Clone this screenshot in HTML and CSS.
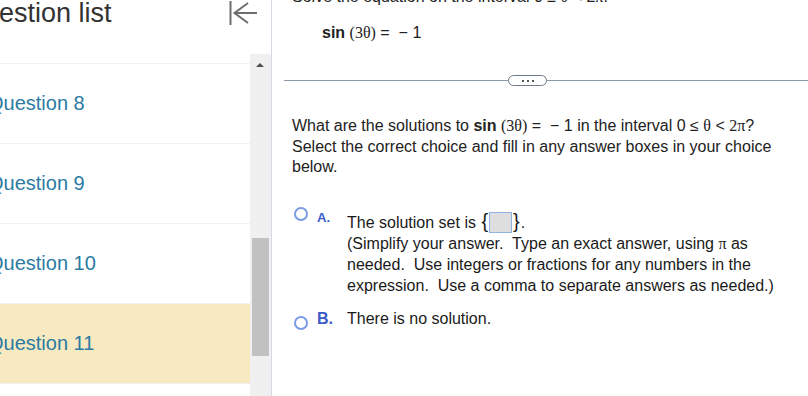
FILE: index.html
```html
<!DOCTYPE html>
<html lang="en">

<head>
    <meta charset="UTF-8">
    <meta name="viewport" content="width=device-width, initial-scale=1.0">
    <title>Question 11</title>
    <link rel="stylesheet" href="styles.css">
</head>

<body>
    <div class="app">
        <div class="sidebar">
            <div class="side-head">
                <h2 class="side-title">Question list</h2>
                <button class="collapse-btn" type="button" title="Collapse">
                    <svg width="30" height="26" viewBox="0 0 30 26">
                        <path d="M2.5 1 V25" />
                        <path d="M6 13 H29" />
                        <path d="M20 3 L6.5 13 L20 23" />
                    </svg>
                </button>
            </div>
            <div class="side-body">
                <div class="q-list">
                    <div class="q-list-inner">
                        <div class="q-row">Question 7</div>
                        <div class="q-row">Question 8</div>
                        <div class="q-row">Question 9</div>
                        <div class="q-row">Question 10</div>
                        <div class="q-row current">Question 11</div>
                        <div class="q-row">Question 12</div>
                    </div>
                </div>
                <div class="scrollbar">
                    <div class="scroll-up"><span class="arrow-up"></span></div>
                    <div class="scroll-thumb"></div>
                </div>
            </div>
        </div>

        <div class="main">
            <div class="stem">
                <p class="stem-text">Solve the equation on the interval 0 &le; <span class="m">&theta;</span> &lt; 2<span class="m">&pi;</span>.</p>
                <p class="equation"><b>sin</b> <span class="m">(3&theta;)</span> = &nbsp;&minus; 1</p>
            </div>

            <div class="divider">
                <span class="divider-line left"></span>
                <button class="more-btn" type="button"><i></i><i></i><i></i></button>
                <span class="divider-line"></span>
            </div>

            <div class="work">
                <p class="question">What are the solutions to <b>sin</b> <span class="m">(3&theta;)</span> = &nbsp;&minus; 1 in the interval 0 &le; <span class="m">&theta;</span> &lt; <span class="m">2&pi;</span>? Select the correct choice and fill in any answer boxes in your choice below.</p>

                <div class="choice">
                    <span class="radio"></span>
                    <span class="choice-label small">A.</span>
                    <div class="choice-text">
                        The solution set is <span class="brace">{</span><span class="ans-box"></span><span class="brace">}</span>.<br>
                        (Simplify your answer.&nbsp; Type an exact answer, using <span class="m">&pi;</span> as needed.&nbsp; Use integers or fractions for any numbers in the expression.&nbsp; Use a comma to separate answers as needed.)
                    </div>
                </div>

                <div class="choice second">
                    <span class="radio low"></span>
                    <span class="choice-label">B.</span>
                    <div class="choice-text">There is no solution.</div>
                </div>
            </div>
        </div>
    </div>
</body>

</html>
```

FILE: styles.css
```css
body {
    font-family: 'Liberation Sans', Arial, sans-serif;
    color: #222;
    margin: 0;
    padding: 0;
    background-color: #fff;
    overflow: hidden;
}

.app {
    display: flex;
    height: 396px;
}

/* left question list */
.sidebar {
    width: 272px;
    flex-shrink: 0;
    border-right: 1px solid #d8d8e4;
    box-sizing: border-box;
    display: flex;
    flex-direction: column;
    overflow: hidden;
}

.side-head {
    height: 54px;
    flex-shrink: 0;
    display: flex;
    justify-content: space-between;
    align-items: flex-start;
}

.side-title {
    margin: 0 0 0 -37px;
    font-size: 27px;
    font-weight: normal;
    line-height: 27px;
    color: #333;
    white-space: nowrap;
}

.collapse-btn {
    background: none;
    border: none;
    padding: 0;
    margin-right: 13px;
    cursor: pointer;
    display: block;
}

.collapse-btn svg {
    display: block;
    fill: none;
    stroke: #6e6e6e;
    stroke-width: 2;
}

.side-body {
    flex: 1;
    display: flex;
    min-height: 0;
}

.q-list {
    width: 250px;
    overflow: hidden;
}

.q-list-inner {
    margin-top: -70px; /* list is scrolled down a little */
}

.q-row {
    height: 80px;
    box-sizing: border-box;
    border-bottom: 1px solid #f1f1f1;
    display: flex;
    align-items: center;
    padding-left: 0;
    text-indent: -12px;
    font-size: 20px;
    color: #2b7ba3;
    white-space: nowrap;
}

.q-row.current {
    background-color: #f8e9c1;
}

.scrollbar {
    width: 21px;
    background-color: #f0f0f0;
    display: flex;
    flex-direction: column;
}

.scroll-up {
    height: 22px;
    display: flex;
    justify-content: center;
    align-items: center;
    padding-right: 1px;
}

.arrow-up {
    width: 0;
    height: 0;
    border-left: 4px solid transparent;
    border-right: 4px solid transparent;
    border-bottom: 4px solid #505050;
}

.scroll-thumb {
    height: 118px;
    margin: 162px 2px 0 2px;
    background-color: #c1c1c1;
}

/* right side */
.main {
    flex: 1;
    min-width: 0;
}

.m {
    font-family: 'Liberation Serif', 'Times New Roman', serif;
}

.stem {
    padding: 0 20px;
}

.stem p {
    margin: 0;
    font-size: 16px;
    line-height: 20px;
}

.stem-text {
    margin-top: -13px !important;
}

.equation {
    margin-top: 16px !important;
    padding-left: 30px;
}

.divider {
    margin: 32px 0 0 12px;
    height: 11px;
    display: flex;
    align-items: center;
}

.divider-line {
    flex: 1;
    height: 1px;
    background-color: #8d99a8;
}

.divider-line.left {
    flex: none;
    width: 224px;
}

.more-btn {
    width: 39px;
    height: 11px;
    padding: 0;
    border: 1px solid #6f7a88;
    border-radius: 6px;
    background-color: #fff;
    display: flex;
    justify-content: center;
    align-items: center;
    gap: 3px;
    cursor: pointer;
}

.more-btn i {
    width: 2px;
    height: 2px;
    background-color: #555;
}

.work {
    padding: 0 20px;
    font-size: 16px;
}

.question {
    margin: 30px 0 0 0;
    line-height: 20.5px;
}

.choice {
    display: flex;
    align-items: flex-start;
    margin-top: 33px;
    line-height: 21px;
}

.choice.second {
    margin-top: 12px;
}

.radio {
    width: 14px;
    height: 14px;
    box-sizing: border-box;
    border: 2px solid #7b9be6;
    border-radius: 50%;
    margin: -4px 0 0 2px;
    flex-shrink: 0;
}

.radio.low {
    margin-top: 8px;
}

.choice-label {
    width: 30px;
    margin-left: 9px;
    flex-shrink: 0;
    font-weight: bold;
    color: #3a5bc7;
}

.choice-label.small {
    font-size: 13px;
    line-height: 13px;
    margin-top: 0;
}

.choice-text {
    flex: 1;
    color: #1a1a1a;
}

.brace {
    font-size: 20px;
    margin: 0 1px;
}

.ans-box {
    display: inline-block;
    width: 23px;
    height: 21px;
    box-sizing: border-box;
    border: 1px solid #8fb2e3;
    background-color: #dedede;
    vertical-align: -5px;
}
```
